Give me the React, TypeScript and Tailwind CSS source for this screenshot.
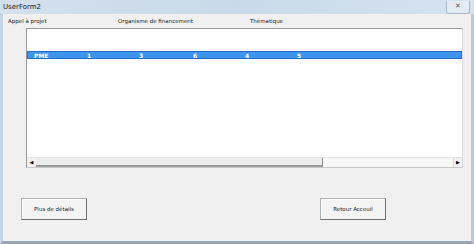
const cols = [
  ["PME", "w-[53px]"],
  ["1", "w-[52px]"],
  ["3", "w-[54px]"],
  ["6", "w-[52px]"],
  ["4", "w-[52px]"],
  ["5", "w-[40px]"],
];

function WinButton({ label }: { label: string }) {
  return (
    <button className="flex h-[22px] w-[66px] items-center justify-center border border-[#b0b0b0] border-b-[#707070] border-r-[#707070] bg-[#f4f4f4] text-[5.5px] text-[#222] shadow-[inset_1px_1px_0_#fff]">
      {label}
    </button>
  );
}

export default function App() {
  return (
    <div
      className="flex h-[244px] w-[474px] flex-col overflow-hidden bg-[#f0f0f0]"
      style={{ fontFamily: '"DejaVu Sans", "Liberation Sans", sans-serif' }}
    >
      <div className="flex h-[14px] shrink-0 items-center justify-between bg-gradient-to-r from-[#d4e0ec] via-[#c9d9e9] to-[#d6e3ef]">
        <span className="pl-[3px] text-[7px] text-[#1a1a1a]">UserForm2</span>
        <div className="mr-[4px] flex h-[13px] w-[24px] items-center justify-center rounded-b-[3px] border border-t-0 border-[#aab8c8] bg-[#e4ebf2] text-[7px] text-[#556]">
          ✕
        </div>
      </div>

      <div className="flex flex-1 border-x-[3px] border-b-[3px] border-l-[#c4d4e6] border-r-[#b9cadd] border-b-[#9aa6b2]">
        <div className="flex flex-1 flex-col">
          <div className="flex h-[14px] items-center pl-[5px] text-[5.5px] text-[#222]">
            <span className="w-[110px]">Appel à projet</span>
            <span className="w-[132px]">Organisme de financement</span>
            <span>Thématique</span>
          </div>

          <div className="ml-[23px] flex h-[140px] w-[437px] flex-col border border-[#9a9a9a] border-b-[#c8c8c8] border-r-[#dcdcdc] bg-white">
            <div className="h-[22px]" />
            <div className="flex h-[8px] items-center border border-[#2a6fbf] bg-[#3d95ef] pl-[6px] text-[6px] font-bold text-white">
              {cols.map(([t, w], i) => (
                <span key={i} className={w}>
                  {t}
                </span>
              ))}
            </div>
            <div className="flex-1" />
            <div className="flex h-[10px] items-stretch border-t border-[#e4e4e4] bg-[#f2f2f2]">
              <div className="flex w-[9px] items-center justify-center text-[5px] text-black">◀</div>
              <div className="w-[287px] border-b-2 border-[#9a9a9a] border-r border-r-[#8a8a8a] bg-[#ececec]" />
              <div className="flex-1 bg-[#f7f7f7]" />
              <div className="flex w-[9px] items-center justify-center border-l border-[#dcdcdc] text-[5px] text-black">▶</div>
            </div>
          </div>

          <div className="mt-[30px] flex pl-[18px]">
            <WinButton label="Plus de détails" />
            <div className="w-[233px]" />
            <WinButton label="Retour Acceuil" />
          </div>
        </div>
      </div>
    </div>
  );
}
